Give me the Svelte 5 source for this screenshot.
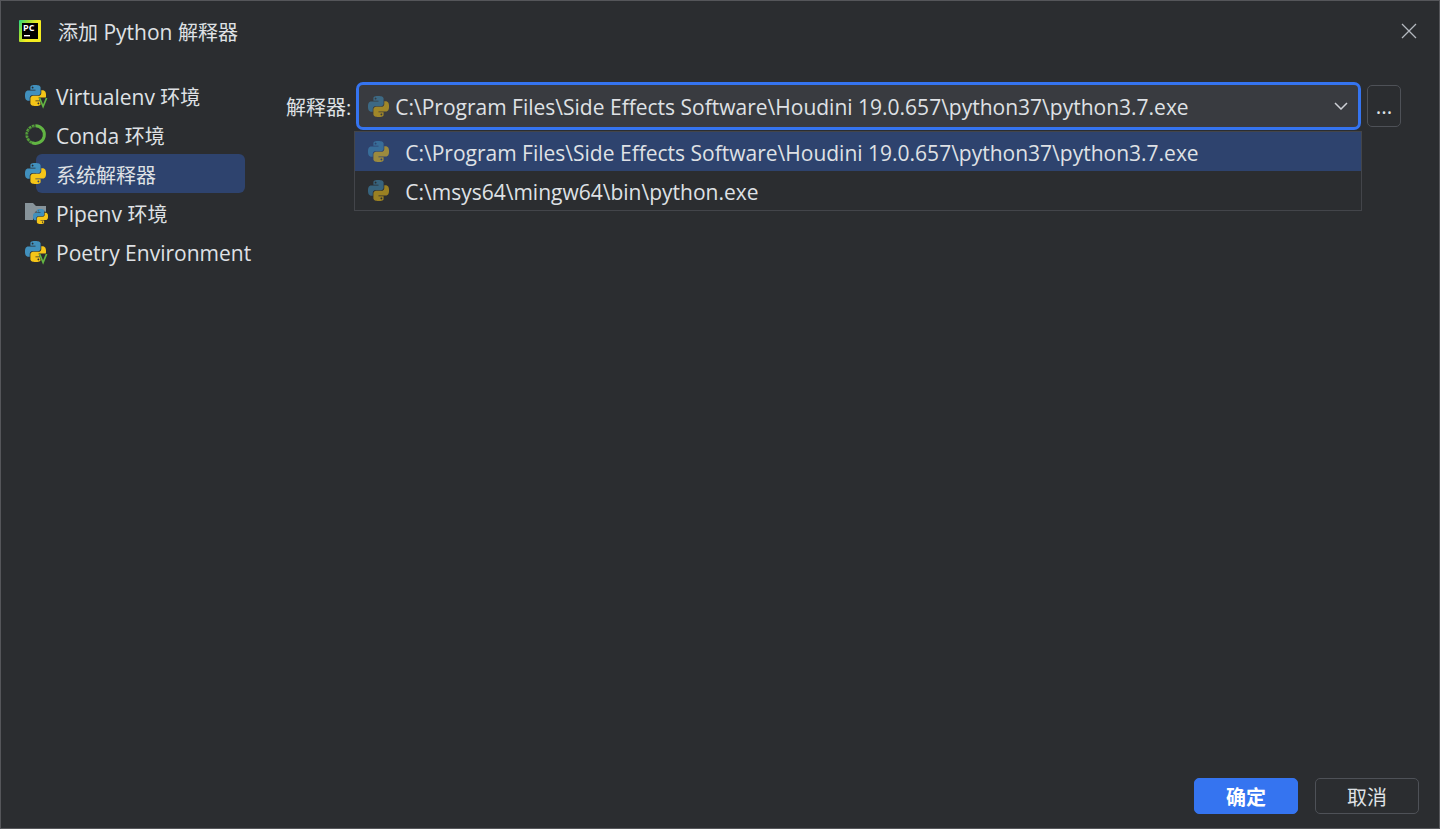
<script>
	const environments = [
		{ id: 'virtualenv', name: 'Virtualenv ', zh: '环境' },
		{ id: 'conda', name: 'Conda ', zh: '环境' },
		{ id: 'system', name: '', zh: '系统解释器' },
		{ id: 'pipenv', name: 'Pipenv ', zh: '环境' },
		{ id: 'poetry', name: 'Poetry Environment', zh: '' }
	];

	const interpreters = [
		'C:\\Program Files\\Side Effects Software\\Houdini 19.0.657\\python37\\python3.7.exe',
		'C:\\msys64\\mingw64\\bin\\python.exe'
	];

	const snake =
		'M14.25.18l.9.2.73.26.59.3.45.32.34.34.25.34.16.33.1.3.04.26.02.2-.01.13V8.5l-.05.63-.13.55-.21.46-.26.38-.3.31-.33.25-.35.19-.35.14-.33.1-.3.07-.26.04-.21.02H8.77l-.69.05-.59.14-.5.22-.41.27-.33.32-.27.35-.2.36-.15.37-.1.35-.07.32-.04.27-.02.21v3.06H3.17l-.21-.03-.28-.07-.32-.12-.35-.18-.36-.26-.36-.36-.35-.46-.32-.59-.28-.73-.21-.88-.14-1.05-.05-1.23.06-1.22.16-1.04.24-.87.32-.71.36-.57.4-.44.42-.33.42-.24.4-.16.36-.1.32-.05.24-.01h.16l.06.01h8.16v-.83H6.18l-.01-2.75-.02-.37.05-.34.11-.31.17-.28.25-.26.31-.23.38-.2.44-.18.51-.15.58-.12.64-.1.71-.06.77-.04.84-.02 1.27.05zm-6.3 1.98l-.23.33-.08.41.08.41.23.34.33.22.41.09.41-.09.33-.22.23-.34.08-.41-.08-.41-.23-.33-.33-.22-.41-.09-.41.09z';

	let current = $state('system');
	let selected = $state(interpreters[0]);
	let open = $state(true);

	function choose(path) {
		selected = path;
		open = false;
	}

	function toggle(e) {
		e.preventDefault();
		open = !open;
	}
</script>

{#snippet snakes()}
	<path d={snake} fill="#4190bd" />
	<path d={snake} fill="#f5c518" transform="rotate(180 12 12)" />
{/snippet}

{#snippet icon(id)}
	<svg class="icon" viewBox="0 0 22 22" aria-hidden="true">
		{#if id === 'conda'}
			<path d="M10.5 1.8a8.8 8.8 0 1 1-3.6 16.8" fill="none" stroke="#62b543" stroke-width="3" />
			<path d="M6.9 18.6A8.8 8.8 0 0 1 10.5 1.8" fill="none" stroke="#559f3b" stroke-width="2.8" stroke-dasharray="2.6 .7" />
			<path d="M5.6 16.4A7.8 7.8 0 0 1 9 2.9" fill="none" stroke="#2b2d30" stroke-width=".8" stroke-dasharray="1 1.6" />
		{:else if id === 'pipenv'}
			<path d="M0 1h8l3 3h10v6h-8l-5 4v4H0z" fill="#87939a" />
			<circle cx="15.5" cy="14.5" r="7" fill="#2b2d30" opacity=".5" />
			<svg x="8" y="7" width="15" height="15" viewBox="0 0 24 24">{@render snakes()}</svg>
		{:else if id === 'system'}
			<svg x="0" y="0" width="21" height="21" viewBox="0 0 24 24">{@render snakes()}</svg>
		{:else}
			<svg x="0" y="0" width="21" height="21" viewBox="0 0 24 24">{@render snakes()}</svg>
			<path d="M13.5 12.5H22V22h-5z" fill="#2b2d30" />
			<path d="M14.6 13l3.5 8.5 3.5-8.5" fill="none" stroke="#62b543" stroke-width="1.7" />
		{/if}
	</svg>
{/snippet}

<div class="dialog" role="dialog" aria-labelledby="title">
	<header>
		<svg class="logo" viewBox="0 0 22 22" aria-hidden="true">
			<defs>
				<linearGradient id="frame" x1="0" y1="0" x2="1" y2="0.6">
					<stop offset="0" stop-color="#21d789" />
					<stop offset="0.3" stop-color="#8fe03a" />
					<stop offset="0.65" stop-color="#f4ec20" />
				</linearGradient>
			</defs>
			<rect width="22" height="22" rx="1" fill="url(#frame)" />
			<rect x="3" y="3" width="16" height="16" fill="#000" />
			<text x="4" y="11" font-size="9" font-weight="700" fill="#fff">PC</text>
			<rect x="5" y="15" width="6" height="1.4" fill="#fff" />
		</svg>
		<h1 id="title"><span class="zh">添加</span> Python <span class="zh">解释器</span></h1>
		<button class="close" aria-label="关闭">
			<svg viewBox="0 0 16 16"><path d="M1 1l14 14M15 1L1 15" stroke="#b4b8bf" stroke-width="1.3" /></svg>
		</button>
	</header>

	<main>
		<nav>
			{#each environments as env}
				<button class="env" class:active={current === env.id} onclick={() => (current = env.id)}>
					{@render icon(env.id)}
					<span class="name">{env.name}<span class="zh">{env.zh}</span></span>
				</button>
			{/each}
		</nav>

		<section>
			<label class="zh" for="interpreter">解释器:</label>
			<div class="combo">
				<svg class="python" viewBox="0 0 24 24" aria-hidden="true">{@render snakes()}</svg>
				<select id="interpreter" bind:value={selected} onmousedown={toggle}>
					{#each interpreters as path}
						<option value={path}>{path}</option>
					{/each}
				</select>
				<svg class="arrow" viewBox="0 0 14 8" aria-hidden="true"><path d="M1 1l6 6 6-6" fill="none" stroke="#ced0d6" stroke-width="1.5" /></svg>
				{#if open}
					<div class="popup" role="listbox" aria-label="解释器">
						{#each interpreters as path}
							<button class="option" class:active={selected === path} role="option" aria-selected={selected === path} onclick={() => choose(path)}>
								<svg class="python" viewBox="0 0 24 24" aria-hidden="true">{@render snakes()}</svg>
								<span>{path}</span>
							</button>
						{/each}
					</div>
				{/if}
			</div>
			<button class="browse" aria-label="浏览">...</button>
		</section>
	</main>

	<footer>
		<button class="ok zh">确定</button>
		<button class="cancel zh">取消</button>
	</footer>
</div>

<style>
	:global(body) {
		background: #2b2d30;
	}
	.dialog {
		box-sizing: border-box;
		display: flex;
		flex-direction: column;
		min-height: 100vh;
		border: 1px solid #55565a;
		background: #2b2d30;
		color: #dfe1e5;
		font: 21px/30px "Open Sans", "Noto Sans CJK SC", sans-serif;
	}
	button, select {
		box-sizing: border-box;
		margin: 0;
		padding: 0;
		border: none;
		background: none;
		color: inherit;
		font: inherit;
		cursor: pointer;
	}
	svg {
		display: block;
		flex: none;
	}
	.zh {
		font-size: 20px;
	}
	header {
		display: flex;
		align-items: center;
		height: 60px;
		padding: 0 22px 0 18px;
	}
	.logo {
		width: 22px;
		height: 22px;
		margin-right: 17px;
	}
	h1 {
		flex: 1;
		margin: 0;
		padding-top: 2px;
		font-size: 21px;
		font-weight: 400;
	}
	.close svg {
		width: 16px;
		height: 16px;
	}
	main {
		flex: 1;
		display: flex;
		align-items: flex-start;
		padding: 15px 38px 0 24px;
	}
	nav {
		display: flex;
		flex-direction: column;
		width: 220px;
		margin-right: 41px;
	}
	.env {
		display: flex;
		align-items: center;
		gap: 9px;
		height: 39px;
		text-align: left;
		white-space: nowrap;
		border-radius: 6px;
	}
	.env.active {
		margin-left: 11px;
		background: #2e436e;
	}
	.env.active .icon {
		margin-left: -11px;
	}
	.icon {
		width: 22px;
		height: 22px;
		overflow: visible;
	}
	.name {
		padding-top: 3px;
	}
	section {
		flex: 1;
		display: flex;
		align-items: center;
		padding-top: 6px;
	}
	label {
		margin-right: 5px;
		padding-top: 3px;
		white-space: nowrap;
	}
	.combo {
		position: relative;
		flex: 1;
		display: flex;
		align-items: center;
		box-sizing: border-box;
		height: 48px;
		border: 3px solid #3574f0;
		border-radius: 7px;
		background: #393b40;
		padding: 0 10px 0 9px;
	}
	.python {
		width: 21px;
		height: 21px;
		opacity: 0.55;
	}
	select {
		flex: 1;
		min-width: 0;
		height: 42px;
		padding: 2px 0 0 6px;
		appearance: none;
		outline: none;
	}
	option {
		background: #2b2d30;
	}
	.arrow {
		width: 14px;
		height: 8px;
		pointer-events: none;
	}
	.popup {
		position: absolute;
		top: 46px;
		left: -5px;
		right: -4px;
		border: 1px solid #43454a;
		background: #2b2d30;
	}
	.option {
		display: flex;
		align-items: center;
		gap: 16px;
		width: 100%;
		height: 39px;
		padding-left: 13px;
		text-align: left;
		white-space: nowrap;
	}
	.option span {
		padding-top: 2px;
	}
	.option.active {
		background: #2e436e;
	}
	.browse {
		width: 34px;
		height: 42px;
		margin-left: 6px;
		border: 1px solid #4e5157;
		border-radius: 5px;
	}
	footer {
		display: flex;
		justify-content: flex-end;
		gap: 17px;
		padding: 0 20px 14px;
	}
	.ok, .cancel {
		width: 104px;
		height: 36px;
		border: 1px solid #4e5157;
		border-radius: 5px;
		padding-top: 3px;
	}
	.ok {
		border-color: #3574f0;
		background: #3574f0;
		color: #fff;
		font-weight: 700;
	}
</style>
